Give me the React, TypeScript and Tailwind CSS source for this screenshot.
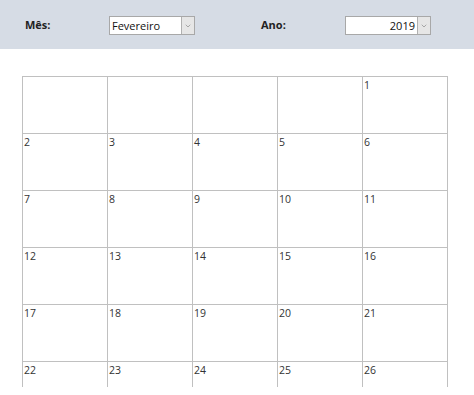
import { ChevronDown } from 'lucide-react';

const days: (number | null)[] = [
  null, null, null, null, 1,
  2, 3, 4, 5, 6,
  7, 8, 9, 10, 11,
  12, 13, 14, 15, 16,
  17, 18, 19, 20, 21,
  22, 23, 24, 25, 26,
];

function FakeSelect({ value, alignRight }: { value: string; alignRight?: boolean }) {
  return (
    <div className="flex h-[19px] w-[86px] border border-[#a8a8a8] bg-white">
      <div
        className={`flex-1 px-[2px] text-[11px] leading-[17px] text-[#111] ${alignRight ? 'text-right' : ''}`}
      >
        {value}
      </div>
      <div className="flex w-[13px] items-center justify-center border-l border-[#b0b0b0] bg-[#e6e6e6]">
        <ChevronDown size={8} strokeWidth={1.5} className="text-[#666]" />
      </div>
    </div>
  );
}

export default function App() {
  return (
    <div className="h-[395px] w-[474px] bg-white font-['Open_Sans','Noto_Sans',sans-serif]">
      {/* Header */}
      <div className="flex h-[49px] items-center bg-[#d6dce5] pl-[25px] pt-[2px]">
        <span className="w-[84px] text-[11px] font-bold text-[#222]">Mês:</span>
        <FakeSelect value="Fevereiro" />
        <span className="ml-[66px] w-[84px] text-[11px] font-bold text-[#222]">Ano:</span>
        <FakeSelect value="2019" alignRight />
      </div>

      {/* Calendar */}
      <div className="ml-[22px] mt-[27px] h-[311px] w-[426px] overflow-hidden">
        <div className="grid grid-cols-[repeat(5,85px)] border-r border-b border-[#c0c0c0]">
          {days.map((d, i) => (
            <div
              key={i}
              className="h-[57px] border-l border-t border-[#c0c0c0] px-[1px] pt-[1px] text-[10.5px] leading-[14px] text-[#333]"
            >
              {d ?? ''}
            </div>
          ))}
        </div>
      </div>
    </div>
  );
}
